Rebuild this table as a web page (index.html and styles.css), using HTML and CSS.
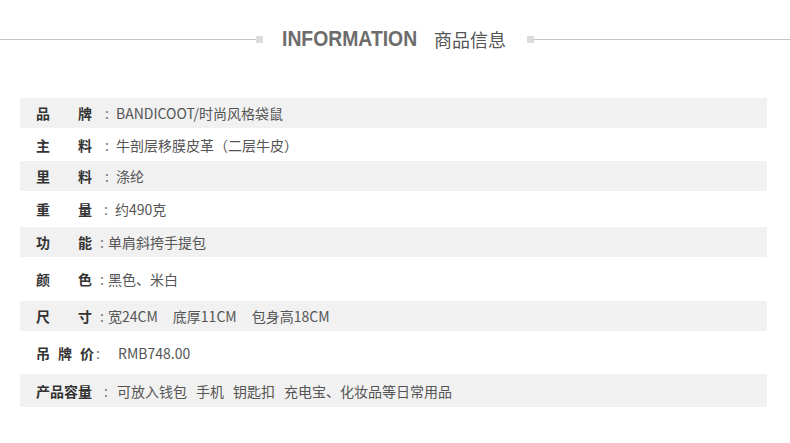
FILE: index.html
```html
<!DOCTYPE html>
<html lang="zh-CN">
<head>
<meta charset="utf-8">
<title>商品信息</title>
<link rel="stylesheet" href="styles.css">
</head>
<body>
<div class="page">
  <header class="title">
    <span class="line line-left"></span>
    <span class="dot"></span>
    <span class="en"><span class="en-inner">INFORMATION</span></span>
    <span class="cn">商品信息</span>
    <span class="dot"></span>
    <span class="line line-right"></span>
  </header>

  <div class="table">
    <div class="row shade h30"><span class="label">品牌</span><span class="colon">:</span><span class="value">BANDICOOT/时尚风格袋鼠</span></div>
    <div class="row h33"><span class="label">主料</span><span class="colon">:</span><span class="value">牛剖层移膜皮革（二层牛皮）</span></div>
    <div class="row shade h30"><span class="label">里料</span><span class="colon">:</span><span class="value">涤纶</span></div>
    <div class="row h36"><span class="label">重量</span><span class="colon colon-mid">:</span><span class="value">约490克</span></div>
    <div class="row shade h30"><span class="label">功能</span><span class="colon colon-tight">:</span><span class="value">单肩斜挎手提包</span></div>
    <div class="row h44"><span class="label">颜色</span><span class="colon colon-tight">:</span><span class="value">黑色、米白</span></div>
    <div class="row shade h30"><span class="label">尺寸</span><span class="colon colon-tight">:</span><span class="value"><span>宽24CM</span><span class="part part-wide">底厚11CM</span><span class="part part-wide">包身高18CM</span></span></div>
    <div class="row h43"><span class="label label-wide">吊牌价</span><span class="colon colon-price">:</span><span class="value">RMB748.00</span></div>
    <div class="row shade h33"><span class="label">产品容量</span><span class="colon colon-wide">:</span><span class="value"><span>可放入钱包</span><span class="part">手机</span><span class="part">钥匙扣</span><span class="part">充电宝、化妆品等日常用品</span></span></div>
  </div>
</div>
</body>
</html>
```

FILE: styles.css
```css
html, body {
  margin: 0;
  padding: 0;
  background: #ffffff;
}

body {
  font-family: "Noto Sans CJK SC", "Noto Sans", sans-serif;
  width: 790px;
  height: 443px;
  overflow: hidden;
}

.page {
  padding-top: 29px;
}

.title {
  display: flex;
  align-items: center;
  height: 20px;
}

.line {
  height: 1px;
  background: #c4c4c4;
}

.line-left {
  width: 256px;
  flex: none;
}

.line-right {
  flex: 1;
}

.dot {
  width: 7px;
  height: 7px;
  background: #dcdcdc;
  flex: none;
}

.en {
  width: 136px;
  margin-left: 19px;
  flex: none;
  white-space: nowrap;
  overflow: visible;
}

.en-inner {
  display: inline-block;
  font-family: "Liberation Sans", Arial, sans-serif;
  font-weight: bold;
  font-size: 22px;
  line-height: 20px;
  color: #6c6c6c;
  transform: scaleX(0.88);
  transform-origin: left center;
}

.cn {
  margin-left: 16px;
  margin-right: 21px;
  font-size: 18px;
  line-height: 20px;
  color: #555555;
  white-space: nowrap;
  width: 72px;
  flex: none;
}

.table {
  margin: 49px 23px 0 20px;
}

.row {
  display: flex;
  align-items: center;
  padding-left: 16px;
  font-size: 14px;
  white-space: nowrap;
}

.shade {
  background: #f1f1f1;
}

.h30 { height: 30px; }
.h33 { height: 33px; }
.h36 { height: 36px; }
.h43 { height: 43px; }
.h44 { height: 44px; }

.label {
  width: 56px;
  font-weight: bold;
  color: #333333;
  text-align: justify;
  text-align-last: justify;
  flex: none;
}

.label-wide {
  width: 58px;
}

.colon {
  margin-left: 13px;
  width: 11px;
  color: #777777;
  flex: none;
}

.colon-mid {
  margin-left: 12px;
  width: 11px;
}

.colon-tight {
  margin-left: 8px;
  width: 8px;
}

.colon-price {
  margin-left: 2px;
  width: 22px;
}

.colon-wide {
  margin-left: 12px;
  width: 13px;
}

.value {
  color: #555555;
}

.part {
  margin-left: 9px;
}

.part-wide {
  margin-left: 15px;
}
```
